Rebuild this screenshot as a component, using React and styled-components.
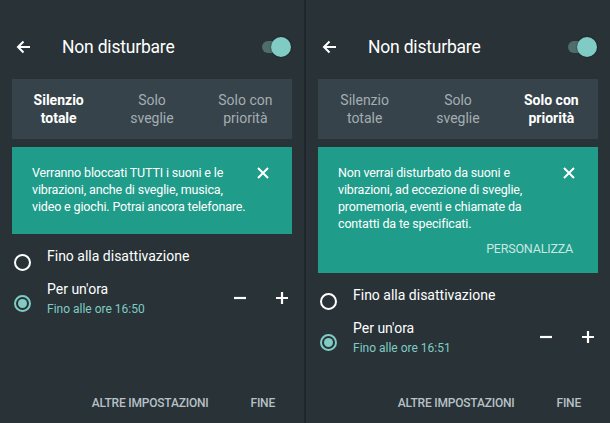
import React from "react";
import styled, { createGlobalStyle } from "styled-components";

const Global = createGlobalStyle`
  html, body { margin: 0; padding: 0; background: #1f272c; }
  body { font-family: Roboto, "Noto Sans", sans-serif; }
`;

const Screen = styled.div`
  display: grid;
  grid-template-columns: 304px 304px;
  gap: 2px;
  width: 610px;
  height: 423px;
  background: #1f272c;
`;

const Panel = styled.div`
  display: flex;
  flex-direction: column;
  background: #283237;
  height: 423px;
  overflow: hidden;
`;

const Header = styled.div`
  display: flex;
  align-items: center;
  height: 32px;
  margin-top: 31px;
  padding: 0 14px 0 16px;
`;

const Title = styled.div`
  flex: 1;
  margin-left: 31px;
  color: #ffffff;
  font-size: 17.5px;
  letter-spacing: -0.2px;
`;

const Toggle = styled.div`
  position: relative;
  width: 30px;
  height: 20px;
  &::before {
    content: "";
    position: absolute;
    left: 2px;
    top: 4px;
    width: 26px;
    height: 12px;
    border-radius: 6px;
    background: #4f6d6b;
  }
  &::after {
    content: "";
    position: absolute;
    right: -1px;
    top: 0;
    width: 20px;
    height: 20px;
    border-radius: 50%;
    background: #80cbc4;
    box-shadow: 0 0 2px rgba(0, 0, 0, 0.6);
  }
`;

const Tabs = styled.div`
  display: grid;
  grid-template-columns: 1fr 1fr 1fr;
  align-items: center;
  height: 60px;
  margin: 16px 12px 0;
  background: #37434a;
`;

const Tab = styled.div`
  text-align: center;
  font-size: 14px;
  line-height: 18px;
  font-weight: ${(p) => (p.$active ? 700 : 400)};
  color: ${(p) => (p.$active ? "#ffffff" : "#a3adb2")};
`;

const Card = styled.div`
  display: flex;
  flex-direction: column;
  margin: 8px 12px 0;
  padding: 17px 20px ${(p) => (p.$withAction ? 16 : 19)}px 20px;
  background: #1f9c8a;
`;

const CardTop = styled.div`
  display: flex;
  align-items: flex-start;
  justify-content: space-between;
`;

const CardText = styled.div`
  color: #ffffff;
  font-size: 12.5px;
  line-height: 17px;
  letter-spacing: -0.15px;
`;

const CardAction = styled.div`
  align-self: flex-end;
  margin-top: 9px;
  margin-right: 5px;
  color: #c9e8e2;
  font-size: 12.5px;
  line-height: 16px;
  letter-spacing: -0.2px;
`;

const Options = styled.div`
  display: flex;
  flex-direction: column;
  padding-top: 12px;
`;

const Option = styled.div`
  display: grid;
  grid-template-columns: 47px 1fr auto;
  margin-top: ${(p) => (p.$first ? 0 : 8)}px;
`;

const Radio = styled.div`
  box-sizing: border-box;
  width: 17px;
  height: 17px;
  margin-left: 14px;
  margin-top: ${(p) => p.$offset}px;
  border-radius: 50%;
  border: 2px solid ${(p) => (p.$checked ? "#80cbc4" : "#ffffff")};
  display: flex;
  align-items: center;
  justify-content: center;
  &::after {
    content: "";
    width: 9px;
    height: 9px;
    border-radius: 50%;
    background: ${(p) => (p.$checked ? "#80cbc4" : "transparent")};
  }
`;

const OptionTitle = styled.div`
  color: #ffffff;
  font-size: 14px;
  line-height: 20px;
`;

const OptionSub = styled.div`
  color: #80cbc4;
  font-size: 12px;
  line-height: 20px;
`;

const Stepper = styled.div`
  display: flex;
  align-items: center;
  gap: 28px;
  height: 38px;
  margin-right: 15px;
`;

const Footer = styled.div`
  display: flex;
  justify-content: flex-end;
  gap: 42px;
  margin-top: auto;
  padding: 0 29px 12px 0;
  color: #b7c1c6;
  font-size: 12px;
  font-weight: 500;
  line-height: 16px;
  letter-spacing: -0.2px;
`;

const BackArrow = () => (
  <svg width="15" height="14" viewBox="0 0 15 14" fill="none" stroke="#fff" strokeWidth="2">
    <path d="M14 7H2M7.5 1.5 2 7l5.5 5.5" />
  </svg>
);

const CloseIcon = () => (
  <svg width="14" height="14" viewBox="0 0 14 14" stroke="#fff" strokeWidth="2" style={{ marginTop: 2, marginRight: 2 }}>
    <path d="M2 2l10 10M12 2 2 12" />
  </svg>
);

const Minus = () => (
  <svg width="14" height="14" viewBox="0 0 14 14" stroke="#fff" strokeWidth="2.2">
    <path d="M1 7h12" />
  </svg>
);

const Plus = () => (
  <svg width="14" height="14" viewBox="0 0 14 14" stroke="#fff" strokeWidth="2.2">
    <path d="M1 7h12M7 1v12" />
  </svg>
);

const tabs = [
  ["Silenzio", "totale"],
  ["Solo", "sveglie"],
  ["Solo con", "priorità"],
];

function DndPanel({ active, lines, action, time }) {
  return (
    <Panel>
      <Header>
        <BackArrow />
        <Title>Non disturbare</Title>
        <Toggle />
      </Header>
      <Tabs>
        {tabs.map((t, i) => (
          <Tab key={i} $active={i === active}>
            {t[0]}
            <br />
            {t[1]}
          </Tab>
        ))}
      </Tabs>
      <Card $withAction={!!action}>
        <CardTop>
          <CardText>
            {lines.map((l, i) => (
              <div key={i}>{l}</div>
            ))}
          </CardText>
          <CloseIcon />
        </CardTop>
        {action && <CardAction>{action}</CardAction>}
      </Card>
      <Options>
        <Option $first>
          <Radio $offset={8} />
          <OptionTitle>Fino alla disattivazione</OptionTitle>
        </Option>
        <Option>
          <Radio $offset={16} $checked />
          <div>
            <OptionTitle>Per un'ora</OptionTitle>
            <OptionSub>Fino alle ore {time}</OptionSub>
          </div>
          <Stepper>
            <Minus />
            <Plus />
          </Stepper>
        </Option>
      </Options>
      <Footer>
        <span>ALTRE IMPOSTAZIONI</span>
        <span>FINE</span>
      </Footer>
    </Panel>
  );
}

export default function App() {
  return (
    <>
      <Global />
      <Screen>
        <DndPanel
          active={0}
          time="16:50"
          lines={[
            "Verranno bloccati TUTTI i suoni e le",
            "vibrazioni, anche di sveglie, musica,",
            "video e giochi. Potrai ancora telefonare.",
          ]}
        />
        <DndPanel
          active={2}
          time="16:51"
          action="PERSONALIZZA"
          lines={[
            "Non verrai disturbato da suoni e",
            "vibrazioni, ad eccezione di sveglie,",
            "promemoria, eventi e chiamate da",
            "contatti da te specificati.",
          ]}
        />
      </Screen>
    </>
  );
}
